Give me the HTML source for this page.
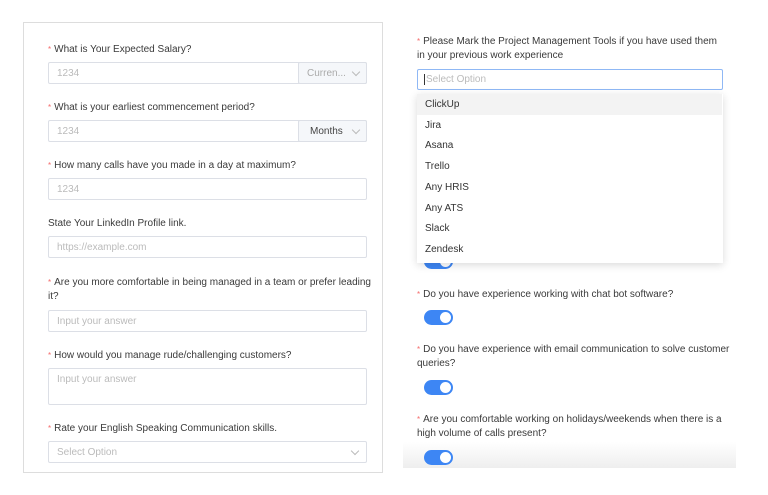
<!DOCTYPE html>
<html><head><meta charset="utf-8"><style>
*{box-sizing:border-box;margin:0;padding:0}
body{width:768px;height:495px;background:#fff;font-family:"Liberation Sans",sans-serif;position:relative;overflow:hidden;color:#333}
.a{position:absolute}
.lbl{font-size:10px;color:#3a3a3a;line-height:14px}
.req{color:#f56c6c;font-size:8px;margin-right:3px}
.inp{border:1px solid #dcdfe6;border-radius:2px;background:#fff;font-size:10px;color:#bbb;padding-left:8px;display:flex;align-items:center}
.chev{position:absolute;width:6px;height:6px;border-right:1px solid #bbb;border-bottom:1px solid #bbb;transform:rotate(45deg)}
.tog{position:absolute;width:29px;height:15px;border-radius:8px;background:#3d86f4}
.tog:after{content:"";position:absolute;right:2px;top:2px;width:11px;height:11px;border-radius:50%;background:#fff}
.item{position:absolute;left:0;width:305px;height:20.7px;font-size:10px;color:#333;padding-left:8px;line-height:22px}
</style></head><body>
<div class="a" style="left:23px;top:22px;width:360px;height:451px;border:1px solid #ddd"></div>

<div class="a lbl" style="left:48px;top:43px"><span class="req">*</span>What is Your Expected Salary?</div>
<div class="a inp" style="left:48px;top:62px;width:319px;height:22px">1234</div>
<div class="a inp" style="left:298px;top:62px;width:69px;height:22px;background:#f5f7fa;color:#aaa">Curren...<span class="chev" style="left:54px;top:6px"></span></div>

<div class="a lbl" style="left:48px;top:101px"><span class="req">*</span>What is your earliest commencement period?</div>
<div class="a inp" style="left:48px;top:120px;width:319px;height:22px">1234</div>
<div class="a inp" style="left:298px;top:120px;width:69px;height:22px;background:#f5f7fa;color:#444;padding-left:11px">Months<span class="chev" style="left:54px;top:6px"></span></div>

<div class="a lbl" style="left:48px;top:159px"><span class="req">*</span>How many calls have you made in a day at maximum?</div>
<div class="a inp" style="left:48px;top:178px;width:319px;height:22px">1234</div>

<div class="a lbl" style="left:48px;top:217px">State Your LinkedIn Profile link.</div>
<div class="a inp" style="left:48px;top:236px;width:319px;height:22px">https://example.com</div>

<div class="a lbl" style="left:48px;top:276px;width:330px"><span class="req">*</span>Are you more comfortable in being managed in a team or prefer leading it?</div>
<div class="a inp" style="left:48px;top:310px;width:319px;height:22px">Input your answer</div>

<div class="a lbl" style="left:48px;top:349px"><span class="req">*</span>How would you manage rude/challenging customers?</div>
<div class="a inp" style="left:48px;top:368px;width:319px;height:37px;align-items:flex-start;padding-top:5px">Input your answer</div>

<div class="a lbl" style="left:48px;top:422px"><span class="req">*</span>Rate your English Speaking Communication skills.</div>
<div class="a inp" style="left:48px;top:441px;width:319px;height:22px">Select Option<span class="chev" style="left:303px;top:6px"></span></div>

<div class="a" style="left:403px;top:30px;width:333px;height:438px;background:linear-gradient(#fff 0,#fff 412px,#eeeeee 438px)"></div>

<div class="a lbl" style="left:417px;top:35px;width:310px"><span class="req">*</span>Please Mark the Project Management Tools if you have used them in your previous work experience</div>
<div class="a inp" style="left:417px;top:69px;width:306px;height:21px;border-color:#8fb8f5;color:#bbb">Select Option</div>
<div class="a" style="left:424px;top:74px;width:1px;height:11px;background:#333"></div>

<div class="tog" style="left:424px;top:254px"></div>
<div class="a" style="left:417px;top:94px;width:306px;height:169px;background:#fff;box-shadow:0 2px 8px rgba(0,0,0,.15)">
<div class="item" style="top:0;background:#f3f3f3">ClickUp</div>
<div class="item" style="top:20.7px">Jira</div>
<div class="item" style="top:41.4px">Asana</div>
<div class="item" style="top:62.1px">Trello</div>
<div class="item" style="top:82.8px">Any HRIS</div>
<div class="item" style="top:103.5px">Any ATS</div>
<div class="item" style="top:124.2px">Slack</div>
<div class="item" style="top:144.9px">Zendesk</div>
</div>

<div class="a lbl" style="left:417px;top:288px"><span class="req">*</span>Do you have experience working with chat bot software?</div>
<div class="tog" style="left:424px;top:310px"></div>

<div class="a lbl" style="left:417px;top:343px;width:322px"><span class="req">*</span>Do you have experience with email communication to solve customer queries?</div>
<div class="tog" style="left:424px;top:380px"></div>

<div class="a lbl" style="left:417px;top:413px;width:310px"><span class="req">*</span>Are you comfortable working on holidays/weekends when there is a high volume of calls present?</div>
<div class="tog" style="left:424px;top:450px"></div>
</body></html>
